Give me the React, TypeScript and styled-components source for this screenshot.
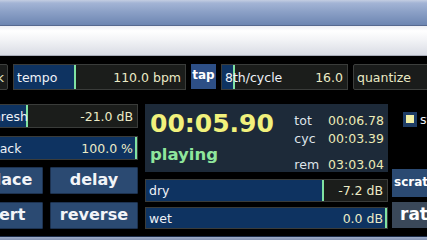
import React from "react";
import styled, { createGlobalStyle } from "styled-components";

const Global = createGlobalStyle`
  html, body {
    margin: 0;
    padding: 0;
    background: #000000;
    overflow: hidden;
  }
  body {
    font-family: "DejaVu Sans", "Liberation Sans", sans-serif;
  }
`;

// slider data, fill is the knob position 0..1
const globals = {
  tempo: { label: "tempo", value: "110.0 bpm", fill: 0.36 },
  eighths: { label: "8th/cycle", value: "16.0", fill: 0.1 },
};

const loopSliders = {
  thresh: { label: "thresh", value: "-21.0 dB", fill: 0.285 },
  feedback: { label: "feedback", value: "100.0 %", fill: 1 },
  dry: { label: "dry", value: "-7.2 dB", fill: 0.737 },
  wet: { label: "wet", value: "0.0 dB", fill: 1 },
};

type SliderProps = {
  label: string;
  value: string;
  fill: number;
  width: number;
  height?: number;
};

const Slider = ({ label, value, fill, width, height = 25 }: SliderProps) => (
  <SliderBox $width={width} $height={height}>
    <SliderFill style={{ width: `${fill * 100}%` }} />
    <SliderText>
      <span>{label}</span>
      <SliderValue>{value}</SliderValue>
    </SliderText>
  </SliderBox>
);

const App = (): JSX.Element => {
  return (
    <>
      <Global />
      <Window>
        <TitleBar />
        <MenuBar />
        <Stage>
          <GlobalsRow>
            <Choice $width={60} $shift={-52}>
              <ChoiceText $align="flex-end">Click</ChoiceText>
            </Choice>
            <Slider {...globals.tempo} width={173} height={26} />
            <TapButton>tap</TapButton>
            <Slider {...globals.eighths} width={127} height={26} />
            <Choice $width={90}>
              <ChoiceText $align="flex-start">quantize</ChoiceText>
            </Choice>
          </GlobalsRow>

          <LoopRow>
            <LeftColumn>
              <Slider {...loopSliders.thresh} width={154} height={24} />
              <Slider {...loopSliders.feedback} width={178} height={24} />
              <ButtonGrid>
                <LoopButton>replace</LoopButton>
                <LoopButton>delay</LoopButton>
              </ButtonGrid>
              <ButtonGrid>
                <LoopButton>insert</LoopButton>
                <LoopButton>reverse</LoopButton>
              </ButtonGrid>
            </LeftColumn>

            <CenterColumn>
              <TimePanel>
                <TimeMain>
                  <BigTime>00:05.90</BigTime>
                  <State>playing</State>
                </TimeMain>
                <TimeGrid>
                  <TimeLabel>tot</TimeLabel>
                  <TimeValue>00:06.78</TimeValue>
                  <TimeLabel>cyc</TimeLabel>
                  <TimeValue>00:03.39</TimeValue>
                  <TimeLabel $gap>rem</TimeLabel>
                  <TimeValue $gap>03:03.04</TimeValue>
                </TimeGrid>
              </TimePanel>
              <Slider {...loopSliders.dry} width={243} height={23} />
              <Slider {...loopSliders.wet} width={243} height={22} />
            </CenterColumn>

            <RightColumn>
              <CheckRow>
                <CheckBox>
                  <CheckMark />
                </CheckBox>
                <CheckLabel>sync</CheckLabel>
              </CheckRow>
              <ScratchButton>scratch</ScratchButton>
              <RateButton>rate</RateButton>
            </RightColumn>
          </LoopRow>

          <NextPanel />
        </Stage>
      </Window>
    </>
  );
};

export default App;

const Window = styled.div`
  width: 427px;
  height: 240px;
  display: flex;
  flex-direction: column;
  overflow: hidden;
`;

const TitleBar = styled.div`
  height: 25px;
  flex-shrink: 0;
  background: linear-gradient(#c4cee2 0px, #a3b4d5 3px, #8ba0c6 12px, #6d86b2 25px);
  border-bottom: 1px solid #56698f;
`;

const MenuBar = styled.div`
  height: 29px;
  flex-shrink: 0;
  background: linear-gradient(#eeeff4 0px, #ffffff 5px, #f2f3f6 14px, #d9dce4 29px);
  border-bottom: 1px solid #a9adb9;
  box-shadow: 0 1px 0 #5a5e66;
`;

const Stage = styled.div`
  flex: 1;
  background: #000000;
  padding-top: 8px;
  display: flex;
  flex-direction: column;
  overflow: hidden;
`;

const GlobalsRow = styled.div`
  display: flex;
  align-items: flex-start;
  gap: 5px;
  height: 26px;
`;

const Choice = styled.div<{ $width: number; $shift?: number }>`
  flex-shrink: 0;
  width: ${(p) => p.$width}px;
  margin-left: ${(p) => p.$shift ?? 0}px;
  height: 26px;
  box-sizing: border-box;
  border: 1px solid #3d3f3d;
  border-radius: 2px;
  background: #1a1c1b;
  display: flex;
`;

const ChoiceText = styled.div<{ $align: string }>`
  flex: 1;
  display: flex;
  align-items: center;
  justify-content: ${(p) => p.$align};
  padding: 0 3px;
  font-size: 12.5px;
  color: #e9e9c4;
  white-space: nowrap;
`;

const SliderBox = styled.div<{ $width: number; $height: number }>`
  position: relative;
  flex-shrink: 0;
  width: ${(p) => p.$width}px;
  height: ${(p) => p.$height}px;
  box-sizing: border-box;
  border: 1px solid #3a3c3a;
  background: #1b1d1b;
  overflow: hidden;
`;

const SliderFill = styled.div`
  position: absolute;
  left: 0;
  top: 0;
  bottom: 0;
  box-sizing: border-box;
  background: #0e3361;
  border-right: 2px solid #80e2a2;
`;

const SliderText = styled.div`
  position: relative;
  height: 100%;
  display: flex;
  align-items: center;
  justify-content: space-between;
  padding: 0 4px 0 3px;
  font-size: 12.5px;
  color: #eef2f8;
  white-space: nowrap;
`;

const SliderValue = styled.span`
  color: #ebebc6;
`;

const TapButton = styled.div`
  flex-shrink: 0;
  width: 25px;
  height: 25px;
  display: flex;
  align-items: center;
  justify-content: center;
  background: #2d4f86;
  color: #ffffff;
  font-weight: bold;
  font-size: 12px;
  padding-bottom: 3px;
  box-sizing: border-box;
`;

const LoopRow = styled.div`
  display: flex;
  align-items: flex-start;
  margin-top: 14px;
  height: 125px;
`;

const LeftColumn = styled.div`
  flex-shrink: 0;
  width: 183px;
  margin-left: -45px;
  margin-right: 7px;
  display: flex;
  flex-direction: column;
  align-items: flex-end;
  gap: 8px;

  & > :nth-child(3) {
    margin-top: -1px;
  }
`;

const ButtonGrid = styled.div`
  display: grid;
  grid-template-columns: 88px 88px;
  gap: 7px;
`;

const LoopButton = styled.div`
  height: 27px;
  box-sizing: border-box;
  display: flex;
  align-items: center;
  justify-content: center;
  background: #2b4a72;
  border: 1px solid #1d3250;
  border-radius: 1px;
  color: #f2f4f8;
  font-weight: bold;
  font-size: 16px;
  white-space: nowrap;
  padding-bottom: 2px;
`;

const CenterColumn = styled.div`
  flex-shrink: 0;
  width: 243px;
  margin-right: 4px;
  display: flex;
  flex-direction: column;

  & > :nth-child(2) {
    margin-top: 7px;
  }
  & > :nth-child(3) {
    margin-top: 5px;
  }
`;

const TimePanel = styled.div`
  height: 68px;
  box-sizing: border-box;
  background: #1d2a39;
  display: flex;
  justify-content: space-between;
  padding: 5px 4px 0 5px;
`;

const TimeMain = styled.div`
  display: flex;
  flex-direction: column;
`;

const BigTime = styled.div`
  font-size: 25px;
  font-weight: bold;
  line-height: 30px;
  color: #f1f17c;
`;

const State = styled.div`
  margin-top: 5px;
  font-size: 16.5px;
  font-weight: bold;
  line-height: 22px;
  color: #8fe69c;
`;

const TimeGrid = styled.div`
  display: grid;
  grid-template-columns: auto auto;
  column-gap: 9px;
  align-content: start;
  padding-top: 3px;
  font-size: 12.5px;
  line-height: 18px;
`;

const TimeLabel = styled.div<{ $gap?: boolean }>`
  color: #dfe4ea;
  margin-top: ${(p) => (p.$gap ? "8px" : "0")};
`;

const TimeValue = styled.div<{ $gap?: boolean }>`
  color: #ecebb6;
  margin-top: ${(p) => (p.$gap ? "8px" : "0")};
`;

const RightColumn = styled.div`
  flex: 1;
  min-width: 0;
  display: flex;
  flex-direction: column;
  align-items: flex-start;
`;

const CheckRow = styled.div`
  display: flex;
  align-items: center;
  gap: 3px;
  margin: 7px 0 0 11px;
  height: 16px;
`;

const CheckBox = styled.div`
  width: 14px;
  height: 15px;
  box-sizing: border-box;
  background: #1f3d66;
  display: flex;
  align-items: center;
  justify-content: center;
`;

const CheckMark = styled.div`
  width: 8px;
  height: 8px;
  background: #f3f1a6;
`;

const CheckLabel = styled.span`
  font-size: 12.5px;
  color: #eef2f8;
  white-space: nowrap;
`;

const ScratchButton = styled.div`
  margin-top: 42px;
  width: 60px;
  height: 28px;
  box-sizing: border-box;
  display: flex;
  align-items: center;
  padding: 0 0 3px 2px;
  background: #2b4a72;
  color: #ffffff;
  font-weight: bold;
  font-size: 12px;
  white-space: nowrap;
`;

const RateButton = styled.div`
  margin-top: 5px;
  width: 60px;
  height: 26px;
  box-sizing: border-box;
  display: flex;
  align-items: center;
  padding: 0 0 2px 8px;
  background: #3a4859;
  color: #ffffff;
  font-weight: bold;
  font-size: 17px;
  white-space: nowrap;
`;

const NextPanel = styled.div`
  margin-top: 7px;
  flex: 1;
  border-top: 1px solid #1b2b47;
  background: linear-gradient(#9eacc8, #8494b4);
`;
